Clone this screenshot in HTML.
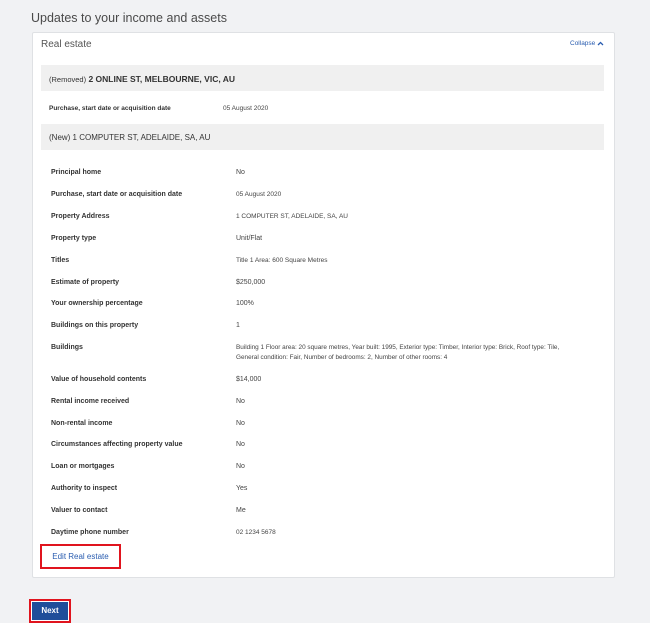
<!DOCTYPE html>
<html><head><style>
body{margin:0;width:650px;height:623px;background:#f1f2f4;font-family:"Liberation Sans",sans-serif;position:relative;overflow:hidden}
.a{position:absolute;white-space:nowrap}
.t{left:31px;top:11px;font-size:12.5px;color:#4a4a4a}
.card{position:absolute;left:32px;top:32px;width:581px;height:544px;background:#fff;border:1px solid #dfe1e4;border-radius:2px}
.bar{position:absolute;left:41px;width:563px;height:26px;background:#f0f0f0}
.h{font-size:8.5px;font-weight:bold;color:#333;left:49px}
.l{left:51px;font-size:7px;font-weight:bold;color:#333}
.v{left:236px;font-size:7px;color:#444}
.r{position:absolute;left:0;top:3px;width:650px}
</style></head><body>
<div class="a t">Updates to your income and assets</div>
<div class="card"></div>
<div class="a" style="left:41px;top:39px;font-size:10px;color:#555">Real estate</div>
<div class="a" style="left:570px;top:40px;font-size:6.5px;color:#2a5db0">Collapse <svg width="7" height="5" viewBox="0 0 7 5" style="vertical-align:middle"><path d="M1 4L3.5 1.5L6 4" stroke="#2a5db0" stroke-width="1.3" fill="none"/></svg></div>
<div class="bar" style="top:65px"></div>
<div class="a h" style="top:74px"><span style="font-weight:normal;font-size:7.5px">(Removed)</span> 2 ONLINE ST, MELBOURNE, VIC, AU</div>
<div class="a l" style="left:49px;top:105px;font-size:6.5px">Purchase, start date or acquisition date</div>
<div class="a v" style="left:223px;top:105px;font-size:6.5px">05 August 2020</div>
<div class="bar" style="top:124px"></div>
<div class="a h" style="top:133px;font-weight:normal;font-size:8px">(New) 1 COMPUTER ST, ADELAIDE, SA, AU</div>
<div class="r">
<div class="a l" style="top:166px">Principal home</div><div class="a v" style="top:166px">No</div>
<div class="a l" style="top:188px">Purchase, start date or acquisition date</div><div class="a v" style="top:188px;font-size:6.5px">05 August 2020</div>
<div class="a l" style="top:210px">Property Address</div><div class="a v" style="top:210px;font-size:6.5px">1 COMPUTER ST, ADELAIDE, SA, AU</div>
<div class="a l" style="top:232px">Property type</div><div class="a v" style="top:232px">Unit/Flat</div>
<div class="a l" style="top:254px">Titles</div><div class="a v" style="top:254px;font-size:6.5px">Title 1 Area: 600 Square Metres</div>
<div class="a l" style="top:276px">Estimate of property</div><div class="a v" style="top:276px">$250,000</div>
<div class="a l" style="top:297px">Your ownership percentage</div><div class="a v" style="top:297px">100%</div>
<div class="a l" style="top:319px">Buildings on this property</div><div class="a v" style="top:319px">1</div>
<div class="a l" style="top:341px">Buildings</div><div class="a v" style="top:340px;font-size:6.4px;line-height:10px">Building 1 Floor area: 20 square metres, Year built: 1995, Exterior type: Timber, Interior type: Brick, Roof type: Tile,<br>General condition: Fair, Number of bedrooms: 2, Number of other rooms: 4</div>
<div class="a l" style="top:373px">Value of household contents</div><div class="a v" style="top:373px">$14,000</div>
<div class="a l" style="top:395px">Rental income received</div><div class="a v" style="top:395px">No</div>
<div class="a l" style="top:417px">Non-rental income</div><div class="a v" style="top:417px">No</div>
<div class="a l" style="top:438px">Circumstances affecting property value</div><div class="a v" style="top:438px">No</div>
<div class="a l" style="top:460px">Loan or mortgages</div><div class="a v" style="top:460px">No</div>
<div class="a l" style="top:482px">Authority to inspect</div><div class="a v" style="top:482px">Yes</div>
<div class="a l" style="top:504px">Valuer to contact</div><div class="a v" style="top:504px">Me</div>
<div class="a l" style="top:526px">Daytime phone number</div><div class="a v" style="top:526px;font-size:6.5px">02 1234 5678</div>
</div>
<div class="a" style="left:40px;top:544px;width:77px;height:21px;border:2px solid #e0141e;font-size:8px;color:#2a5db0;text-align:center;line-height:21px">Edit Real estate</div>
<div class="a" style="left:29px;top:599px;width:38px;height:20px;border:2px solid #e0141e;background:#fff"><div style="position:absolute;left:1px;top:1px;right:1px;bottom:1px;background:#1f4e9a;color:#fff;font-size:8px;font-weight:bold;text-align:center;line-height:18px">Next</div></div>
</body></html>
